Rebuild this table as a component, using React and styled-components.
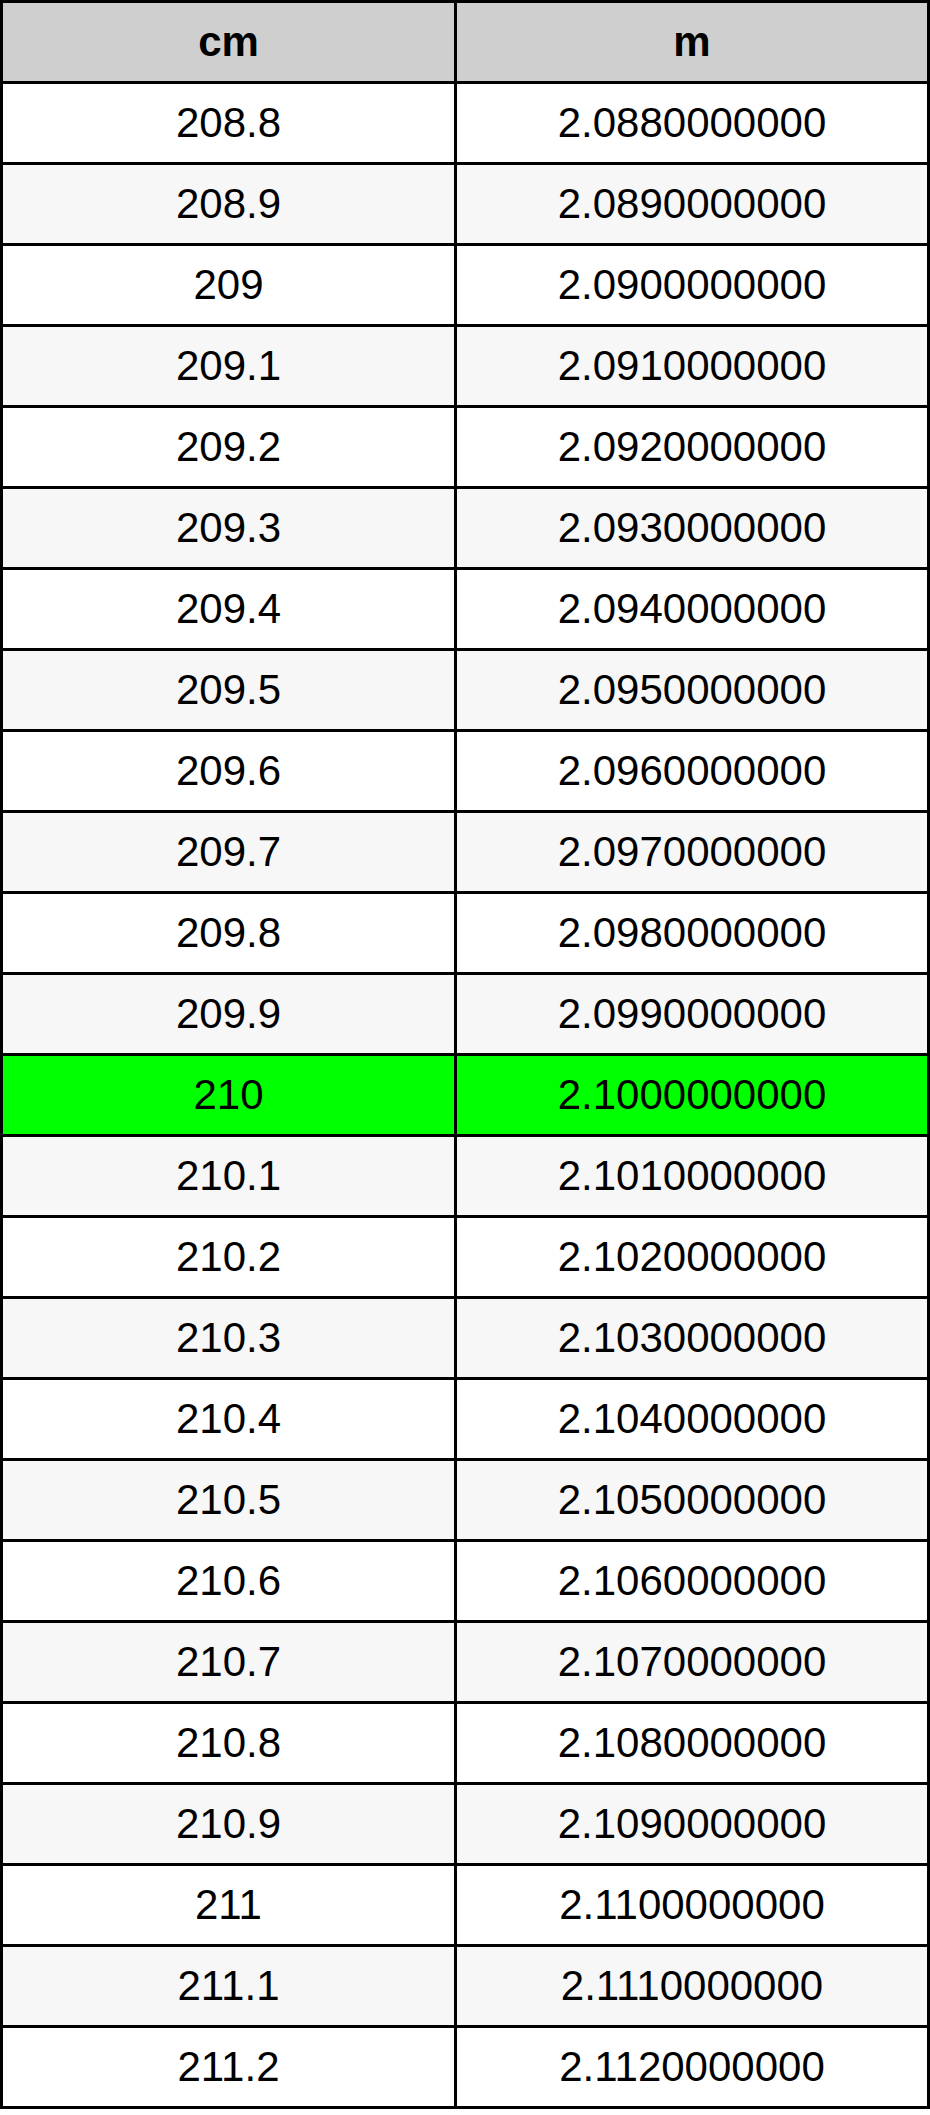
import React from 'react';
import styled, { createGlobalStyle } from 'styled-components';

const GlobalStyle = createGlobalStyle`
  body {
    margin: 0;
    background: #ffffff;
    font-family: 'Liberation Sans', Arial, sans-serif;
  }
`;

const Table = styled.div`
  width: 930px;
  box-sizing: border-box;
  display: grid;
  grid-template-columns: 451px 470px;
  grid-auto-rows: 78px;
  gap: 3px;
  padding: 3px;
  background: #000000;
`;

const Cell = styled.div`
  display: flex;
  align-items: center;
  justify-content: center;
  font-size: 42px;
  color: #000000;
  background: ${(p) => (p.$highlight ? '#00ff00' : p.$striped ? '#f7f7f7' : '#ffffff')};
`;

const HeadCell = styled(Cell)`
  background: #cfcfcf;
  font-weight: bold;
`;

const rows = [];
for (let i = 0; i < 25; i++) {
  const tenths = 2088 + i;
  const cm = tenths % 10 === 0 ? String(tenths / 10) : (tenths / 10).toFixed(1);
  const m = (tenths / 1000).toFixed(10);
  rows.push({ cm, m });
}

const App = () => {
  return (
    <>
      <GlobalStyle />
      <Table>
        <HeadCell>cm</HeadCell>
        <HeadCell>m</HeadCell>
        {rows.map((r, i) => {
          const highlight = r.cm === '210';
          const striped = i % 2 === 1;
          return (
            <React.Fragment key={r.cm}>
              <Cell $highlight={highlight} $striped={striped}>{r.cm}</Cell>
              <Cell $highlight={highlight} $striped={striped}>{r.m}</Cell>
            </React.Fragment>
          );
        })}
      </Table>
    </>
  );
};

export default App;
